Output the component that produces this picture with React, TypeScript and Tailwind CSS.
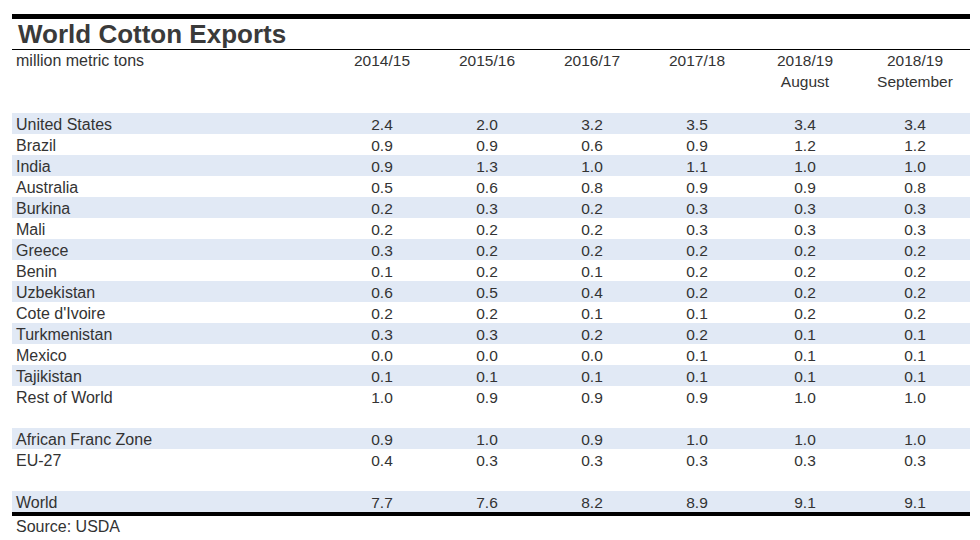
const years = ["2014/15", "2015/16", "2016/17", "2017/18"];

type Row = { name: string; values: string[]; striped: boolean } | null;

const rows: Row[] = [
  { name: "United States", values: ["2.4", "2.0", "3.2", "3.5", "3.4", "3.4"], striped: true },
  { name: "Brazil", values: ["0.9", "0.9", "0.6", "0.9", "1.2", "1.2"], striped: false },
  { name: "India", values: ["0.9", "1.3", "1.0", "1.1", "1.0", "1.0"], striped: true },
  { name: "Australia", values: ["0.5", "0.6", "0.8", "0.9", "0.9", "0.8"], striped: false },
  { name: "Burkina", values: ["0.2", "0.3", "0.2", "0.3", "0.3", "0.3"], striped: true },
  { name: "Mali", values: ["0.2", "0.2", "0.2", "0.3", "0.3", "0.3"], striped: false },
  { name: "Greece", values: ["0.3", "0.2", "0.2", "0.2", "0.2", "0.2"], striped: true },
  { name: "Benin", values: ["0.1", "0.2", "0.1", "0.2", "0.2", "0.2"], striped: false },
  { name: "Uzbekistan", values: ["0.6", "0.5", "0.4", "0.2", "0.2", "0.2"], striped: true },
  { name: "Cote d'Ivoire", values: ["0.2", "0.2", "0.1", "0.1", "0.2", "0.2"], striped: false },
  { name: "Turkmenistan", values: ["0.3", "0.3", "0.2", "0.2", "0.1", "0.1"], striped: true },
  { name: "Mexico", values: ["0.0", "0.0", "0.0", "0.1", "0.1", "0.1"], striped: false },
  { name: "Tajikistan", values: ["0.1", "0.1", "0.1", "0.1", "0.1", "0.1"], striped: true },
  { name: "Rest of World", values: ["1.0", "0.9", "0.9", "0.9", "1.0", "1.0"], striped: false },
  null,
  { name: "African Franc Zone", values: ["0.9", "1.0", "0.9", "1.0", "1.0", "1.0"], striped: true },
  { name: "EU-27", values: ["0.4", "0.3", "0.3", "0.3", "0.3", "0.3"], striped: false },
  null,
  { name: "World", values: ["7.7", "7.6", "8.2", "8.9", "9.1", "9.1"], striped: true },
];

const grid = "grid grid-cols-[318px_104px_106px_104px_106px_110px_110px]";

export default function App() {
  return (
    <div
      className="w-[980px] h-[540px] bg-white pl-[12px] pt-[14px] text-[#333333]"
      style={{ fontFamily: '"Liberation Sans", Arial, sans-serif' }}
    >
      <div className="w-[958px]">
        {/* Title */}
        <div className="h-[5px] bg-black" />
        <div className="h-[30px] pl-[6px] text-[26px] leading-[30px] font-bold text-[#3a3a3a]">
          World Cotton Exports
        </div>
        <div className="h-px bg-black" />

        {/* Column headers */}
        <div className={`${grid} h-[63px]`}>
          <div className="pl-[4px] text-[16px] leading-[21px]">million metric tons</div>
          {years.map((y) => (
            <div key={y} className="text-center text-[15.5px] leading-[21px]">
              {y}
            </div>
          ))}
          <div className="text-center text-[15.5px] leading-[21px]">
            2018/19
            <br />
            August
          </div>
          <div className="text-center text-[15.5px] leading-[21px]">
            2018/19
            <br />
            September
          </div>
        </div>

        {/* Data rows */}
        {rows.map((row, i) =>
          row ? (
            <div
              key={i}
              className={`${grid} h-[21px] pt-[2px] ${row.striped ? "bg-[#e1e9f5]" : ""}`}
            >
              <div className="pl-[4px] text-[16px] leading-[19px]">{row.name}</div>
              {row.values.map((v, j) => (
                <div key={j} className="text-center text-[15.5px] leading-[19px]">
                  {v}
                </div>
              ))}
            </div>
          ) : (
            <div key={i} className="h-[21px]" />
          )
        )}
        <div className="h-[4px] bg-black" />
        <div className="pl-[4px] text-[16px] leading-[21px]">Source: USDA</div>
      </div>
    </div>
  );
}
